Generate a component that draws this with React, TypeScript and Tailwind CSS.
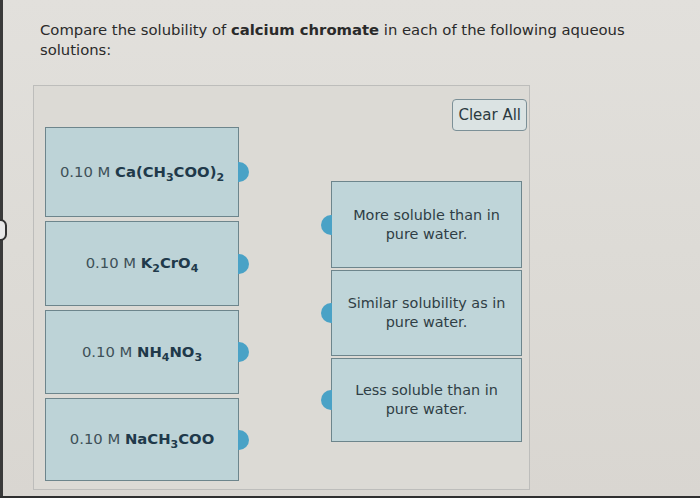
import React from "react";

type Side = "left" | "right";

function Knob({ side }: { side: Side }) {
  return side === "right" ? (
    <span className="absolute right-[-11px] top-1/2 h-[20px] w-[11px] -translate-y-1/2 rounded-r-full bg-[#4aa2c6]" />
  ) : (
    <span className="absolute left-[-11px] top-1/2 h-[20px] w-[11px] -translate-y-1/2 rounded-l-full bg-[#4aa2c6]" />
  );
}

function Sub({ children }: { children: React.ReactNode }) {
  return <sub className="relative top-[1px] text-[11px] leading-none align-[-3px]">{children}</sub>;
}

function Solution({ h, children }: { h: string; children: React.ReactNode }) {
  return (
    <div className={`relative flex items-center justify-center border border-[#6d858c] bg-[#bdd3d7] ${h}`}>
      <span className="text-[14.8px] text-[#3e5058]">{children}</span>
      <Knob side="right" />
    </div>
  );
}

function Answer({ h, text1, text2 }: { h: string; text1: string; text2: string }) {
  return (
    <div className={`relative flex flex-col items-center justify-center border border-[#6d858c] bg-[#bfd5d9] text-center text-[14.4px] leading-[19px] text-[#2f3e45] ${h}`}>
      <span>{text1}</span>
      <span>{text2}</span>
      <Knob side="left" />
    </div>
  );
}

export default function App() {
  return (
    <div
      className="relative h-[498px] w-[700px] overflow-hidden bg-gradient-to-b from-[#e2e0dc] via-[#dddbd6] to-[#d9d6d1]"
      style={{ fontFamily: '"DejaVu Sans", Verdana, sans-serif' }}
    >
      {/* screen bezel on the left and bottom edges */}
      <div className="absolute inset-y-0 left-0 w-[3px] bg-[#3a3a3a]" />
      <div className="absolute bottom-0 left-0 right-0 h-[2px] bg-[#2f2f2f]" />
      <div className="absolute left-[-6px] top-[219px] h-[22px] w-[13px] rounded-full border-2 border-[#333] bg-[#e8e8e8]" />

      <div className="pl-[40px] pt-[20px]">
        <p className="text-[14.8px] leading-[20px] text-[#2a2a2a]">
          Compare the solubility of <b>calcium chromate</b> in each of the following aqueous
          <br />
          solutions:
        </p>

        <div className="ml-[-7px] mt-[25px] flex h-[405px] w-[497px] border border-[#bdbdbb] bg-[#dcdad5]">
          {/* solutions column */}
          <div className="ml-[11px] mt-[41px] flex w-[194px] flex-col gap-[4px]">
            <Solution h="h-[90px]">
              0.10 M{" "}
              <b className="text-[#20394a]">
                Ca(CH<Sub>3</Sub>COO)<Sub>2</Sub>
              </b>
            </Solution>
            <Solution h="h-[85px]">
              0.10 M{" "}
              <b className="text-[#20394a]">
                K<Sub>2</Sub>CrO<Sub>4</Sub>
              </b>
            </Solution>
            <Solution h="h-[84px]">
              0.10 M{" "}
              <b className="text-[#20394a]">
                NH<Sub>4</Sub>NO<Sub>3</Sub>
              </b>
            </Solution>
            <Solution h="h-[83px]">
              0.10 M{" "}
              <b className="text-[#20394a]">
                NaCH<Sub>3</Sub>COO
              </b>
            </Solution>
          </div>

          {/* answers column */}
          <div className="ml-[92px] flex w-[196px] flex-col">
            <div className="mt-[13px] flex justify-end">
              <button className="h-[32px] rounded-[4px] border border-[#7c9097] bg-[#dbe3e3] px-[5px] text-[15px] text-[#2c3a40]">
                Clear All
              </button>
            </div>
            <div className="mt-[50px] flex w-[191px] flex-col gap-[2px]">
              <Answer h="h-[87px]" text1="More soluble than in" text2="pure water." />
              <Answer h="h-[86px]" text1="Similar solubility as in" text2="pure water." />
              <Answer h="h-[84px]" text1="Less soluble than in" text2="pure water." />
            </div>
          </div>
        </div>
      </div>
    </div>
  );
}
